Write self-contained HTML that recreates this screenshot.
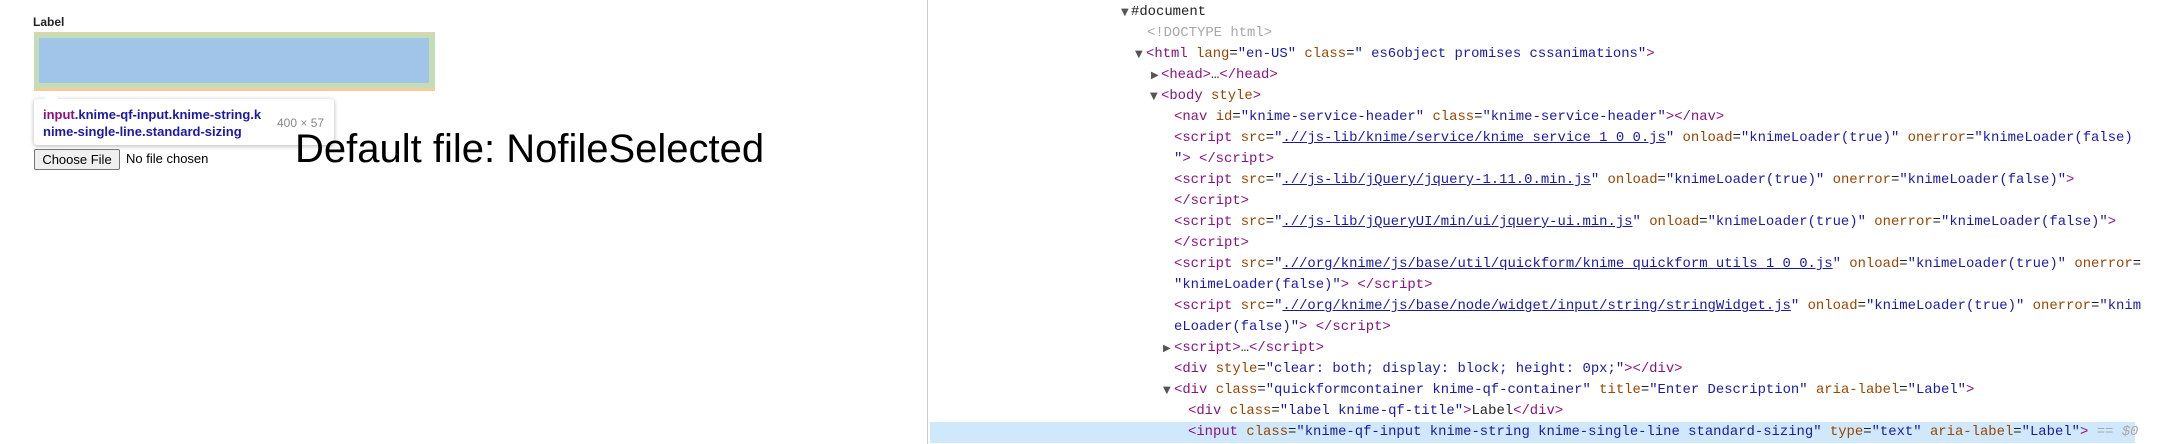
<!DOCTYPE html>
<html><head><style>
body{margin:0;width:2159px;height:444px;background:#fff;position:relative;overflow:hidden;font-family:"Liberation Sans",sans-serif}
.a{position:absolute}
.r{position:absolute;white-space:pre;font-family:"Liberation Mono",monospace;font-size:13.9px;line-height:21px;height:21px;color:#222}
.t{color:#881280}.n{color:#994500}.v{color:#1a1aa6}.l{color:#1a1aa6;text-decoration:underline}.g{color:#a8a8a8}
.tri{position:absolute;font-size:10px;color:#555;font-family:"DejaVu Sans",sans-serif;line-height:21px}
</style></head><body>
<div class="a" style="left:33px;top:15px;font-size:12px;font-weight:bold;color:#222">Label</div>
<div class="a" style="left:34px;top:32px;width:401px;height:59px;background:#f8cb9c"></div>
<div class="a" style="left:34px;top:33px;width:401px;height:55px;background:#c3deb7"></div>
<div class="a" style="left:39px;top:38px;width:390px;height:45px;background:#a0c5e8"></div>
<div class="a" style="left:34px;top:99px;width:300px;height:46px;background:#fff;border-radius:3px;box-shadow:0 1px 5px rgba(0,0,0,.3)"></div>
<div class="a" style="left:44px;top:92px;width:0;height:0;border-left:7px solid transparent;border-right:7px solid transparent;border-bottom:7px solid #fff"></div>
<div class="a" style="left:43px;top:106px;font-size:13px;font-weight:bold;line-height:17px;color:#1a1aa6"><span style="color:#881280">input</span>.knime-qf-input.knime-string.k<br>nime-single-line.standard-sizing</div>
<div class="a" style="left:277px;top:116px;font-size:12px;color:#888">400 × 57</div>
<div class="a" style="left:34px;top:149px;width:84px;height:19px;background:#efefef;border:1px solid #767676;border-radius:2px;font-size:13px;line-height:19px;text-align:center;color:#000">Choose File</div>
<div class="a" style="left:126px;top:151px;font-size:13px;color:#000">No file chosen</div>
<div class="a" style="left:295px;top:127px;font-size:40px;color:#000">Default file: NofileSelected</div>
<div class="a" style="left:927px;top:0;width:1px;height:444px;background:#ccc"></div>
<div class="a" style="left:930px;top:422px;width:1205px;height:21px;background:#cfe8fc"></div>
<span class="tri" style="left:1121px;top:2px">▼</span><div class="r" style="left:1131px;top:2px">#document</div>
<div class="r g" style="left:1147px;top:23px">&lt;!DOCTYPE html&gt;</div>
<span class="tri" style="left:1135px;top:44px">▼</span><div class="r" style="left:1146px;top:44px"><span class="t">&lt;html</span> <span class="n">lang</span>=<span class="v">"en-US"</span> <span class="n">class</span>=<span class="v">" es6object promises cssanimations"</span><span class="t">&gt;</span></div>
<span class="tri" style="left:1151px;top:65px">▶</span><div class="r" style="left:1161px;top:65px"><span class="t">&lt;head&gt;</span>…<span class="t">&lt;/head&gt;</span></div>
<span class="tri" style="left:1150px;top:86px">▼</span><div class="r" style="left:1161px;top:86px"><span class="t">&lt;body</span> <span class="n">style</span><span class="t">&gt;</span></div>
<div class="r" style="left:1174px;top:107px"><span class="t">&lt;nav</span> <span class="n">id</span>=<span class="v">"knime-service-header"</span> <span class="n">class</span>=<span class="v">"knime-service-header"</span><span class="t">&gt;&lt;/nav&gt;</span></div>
<div class="r" style="left:1174px;top:128px"><span class="t">&lt;script</span> <span class="n">src</span>=<span class="v">"</span><span class="l">.//js-lib/knime/service/knime_service_1_0_0.js</span><span class="v">"</span> <span class="n">onload</span>=<span class="v">"knimeLoader(true)"</span> <span class="n">onerror</span>=<span class="v">"knimeLoader(false)</span></div>
<div class="r" style="left:1174px;top:149px"><span class="v">"</span><span class="t">&gt; &lt;/script&gt;</span></div>
<div class="r" style="left:1174px;top:170px"><span class="t">&lt;script</span> <span class="n">src</span>=<span class="v">"</span><span class="l">.//js-lib/jQuery/jquery-1.11.0.min.js</span><span class="v">"</span> <span class="n">onload</span>=<span class="v">"knimeLoader(true)"</span> <span class="n">onerror</span>=<span class="v">"knimeLoader(false)"</span><span class="t">&gt;</span></div>
<div class="r" style="left:1174px;top:191px"><span class="t">&lt;/script&gt;</span></div>
<div class="r" style="left:1174px;top:212px"><span class="t">&lt;script</span> <span class="n">src</span>=<span class="v">"</span><span class="l">.//js-lib/jQueryUI/min/ui/jquery-ui.min.js</span><span class="v">"</span> <span class="n">onload</span>=<span class="v">"knimeLoader(true)"</span> <span class="n">onerror</span>=<span class="v">"knimeLoader(false)"</span><span class="t">&gt;</span></div>
<div class="r" style="left:1174px;top:233px"><span class="t">&lt;/script&gt;</span></div>
<div class="r" style="left:1174px;top:254px"><span class="t">&lt;script</span> <span class="n">src</span>=<span class="v">"</span><span class="l">.//org/knime/js/base/util/quickform/knime_quickform_utils_1_0_0.js</span><span class="v">"</span> <span class="n">onload</span>=<span class="v">"knimeLoader(true)"</span> <span class="n">onerror</span>=</div>
<div class="r" style="left:1174px;top:275px"><span class="v">"knimeLoader(false)"</span><span class="t">&gt; &lt;/script&gt;</span></div>
<div class="r" style="left:1174px;top:296px"><span class="t">&lt;script</span> <span class="n">src</span>=<span class="v">"</span><span class="l">.//org/knime/js/base/node/widget/input/string/stringWidget.js</span><span class="v">"</span> <span class="n">onload</span>=<span class="v">"knimeLoader(true)"</span> <span class="n">onerror</span>=<span class="v">"knim</span></div>
<div class="r" style="left:1174px;top:317px"><span class="v">eLoader(false)"</span><span class="t">&gt; &lt;/script&gt;</span></div>
<span class="tri" style="left:1163px;top:338px">▶</span><div class="r" style="left:1174px;top:338px"><span class="t">&lt;script&gt;</span>…<span class="t">&lt;/script&gt;</span></div>
<div class="r" style="left:1174px;top:359px"><span class="t">&lt;div</span> <span class="n">style</span>=<span class="v">"clear: both; display: block; height: 0px;"</span><span class="t">&gt;&lt;/div&gt;</span></div>
<span class="tri" style="left:1163px;top:380px">▼</span><div class="r" style="left:1174px;top:380px"><span class="t">&lt;div</span> <span class="n">class</span>=<span class="v">"quickformcontainer knime-qf-container"</span> <span class="n">title</span>=<span class="v">"Enter Description"</span> <span class="n">aria-label</span>=<span class="v">"Label"</span><span class="t">&gt;</span></div>
<div class="r" style="left:1188px;top:401px"><span class="t">&lt;div</span> <span class="n">class</span>=<span class="v">"label knime-qf-title"</span><span class="t">&gt;</span>Label<span class="t">&lt;/div&gt;</span></div>
<div class="r" style="left:1188px;top:422px"><span class="t">&lt;input</span> <span class="n">class</span>=<span class="v">"knime-qf-input knime-string knime-single-line standard-sizing"</span> <span class="n">type</span>=<span class="v">"text"</span> <span class="n">aria-label</span>=<span class="v">"Label"</span><span class="t">&gt;</span> <span class="g">== <i>$0</i></span></div>
</body></html>
